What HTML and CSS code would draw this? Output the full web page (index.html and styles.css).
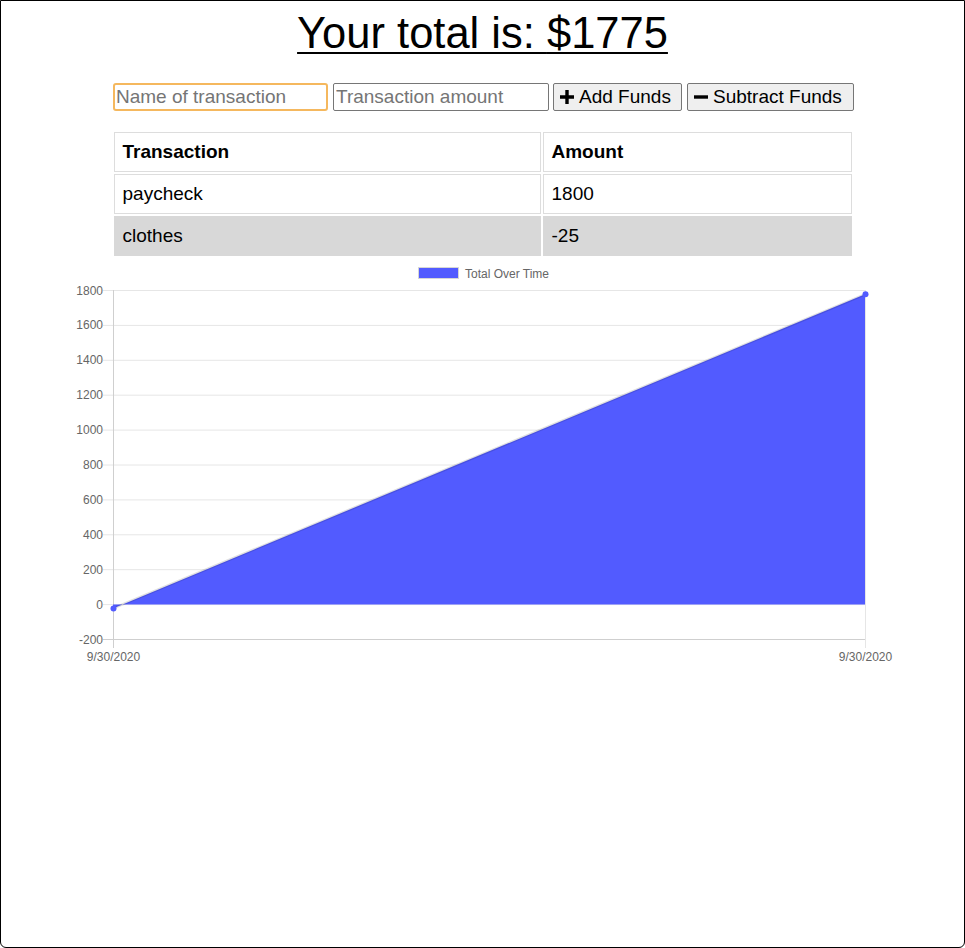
FILE: index.html
```html
<!DOCTYPE html>
<html>
<head>
<meta charset="utf-8">
<title>Budget Tracker</title>
<link rel="stylesheet" href="styles.css">
</head>
<body>
<div class="frame">
  <h1 class="total">Your total is: <span>$1775</span></h1>
  <div class="form">
    <input class="field focused" type="text" placeholder="Name of transaction">
    <input class="field second" type="text" placeholder="Transaction amount">
    <button class="btn add"><svg class="ico" viewBox="0 0 14 14" width="14" height="14"><path d="M5.3 0h3.4v5.3H14v3.4H8.7V14H5.3V8.7H0V5.3h5.3z" fill="#000"/></svg>Add Funds</button>
    <button class="btn sub"><svg class="ico" viewBox="0 0 14 14" width="14" height="14"><rect x="0" y="5.3" width="14" height="3.4" fill="#000"/></svg>Subtract Funds</button>
  </div>
  <table class="tx">
    <thead>
      <tr><th class="c1">Transaction</th><th>Amount</th></tr>
    </thead>
    <tbody>
      <tr><td>paycheck</td><td>1800</td></tr>
      <tr class="alt"><td>clothes</td><td>-25</td></tr>
    </tbody>
  </table>
  <svg class="chart" width="963" height="420" viewBox="1 262 963 420">
    <g class="grid">
      <line x1="103" y1="290.5" x2="865" y2="290.5"/>
      <line x1="103" y1="325.4" x2="865" y2="325.4"/>
      <line x1="103" y1="360.3" x2="865" y2="360.3"/>
      <line x1="103" y1="395.2" x2="865" y2="395.2"/>
      <line x1="103" y1="430.1" x2="865" y2="430.1"/>
      <line x1="103" y1="465" x2="865" y2="465"/>
      <line x1="103" y1="499.9" x2="865" y2="499.9"/>
      <line x1="103" y1="534.8" x2="865" y2="534.8"/>
      <line x1="103" y1="569.7" x2="865" y2="569.7"/>
      <line x1="103" y1="604.6" x2="865" y2="604.6"/>
      <line class="axis" x1="103" y1="639.5" x2="865" y2="639.5"/>
      <line class="axis" x1="113.5" y1="290" x2="113.5" y2="648"/>
      <line x1="865.5" y1="290" x2="865.5" y2="648"/>
    </g>
    <polygon class="area" points="113,608.4 865,294.3 865,604.6 113,604.6"/>
    <line class="stroke" x1="113" y1="608.4" x2="865" y2="294.3"/>
    <circle class="pt" cx="113.5" cy="608.4" r="3"/>
    <circle class="pt" cx="865.5" cy="294.3" r="3"/>
    <g class="ylab">
      <text x="103" y="294.5">1800</text>
      <text x="103" y="329.4">1600</text>
      <text x="103" y="364.3">1400</text>
      <text x="103" y="399.2">1200</text>
      <text x="103" y="434.1">1000</text>
      <text x="103" y="469">800</text>
      <text x="103" y="503.9">600</text>
      <text x="103" y="538.8">400</text>
      <text x="103" y="573.7">200</text>
      <text x="103" y="608.6">0</text>
      <text x="103" y="643.5">-200</text>
    </g>
    <g class="xlab">
      <text x="113.5" y="661">9/30/2020</text>
      <text x="865.5" y="661">9/30/2020</text>
    </g>
    <rect class="legbox" x="418.5" y="267.5" width="40" height="11"/>
    <text class="legtxt" x="465" y="277.5">Total Over Time</text>
  </svg>
</div>
</body>
</html>
```

FILE: styles.css
```css
html, body {
  margin: 0;
  padding: 0;
  background: #fff;
}
.frame {
  box-sizing: border-box;
  width: 965px;
  height: 948px;
  border: 1px solid #000;
  border-radius: 0 0 6px 6px;
  padding-top: 7px;
  font-family: "Liberation Sans", Arial, sans-serif;
  color: #000;
}
.total {
  margin: 0;
  text-align: center;
  font-size: 43.5px;
  font-weight: normal;
  line-height: 50px;
  text-decoration: underline;
  text-decoration-thickness: 2px;
  text-underline-offset: 4px;
}
.form {
  display: flex;
  justify-content: center;
  gap: 5px;
  margin-top: 25px;
  padding-left: 2px;
  height: 28px;
}
.field {
  box-sizing: border-box;
  width: 215px;
  height: 28px;
  margin: 0;
  padding: 0 2px;
  border: 1px solid #767676;
  border-radius: 2px;
  font-family: "Liberation Sans", Arial, sans-serif;
  font-size: 19px;
  color: #000;
  background: #fff;
}
.field::placeholder {
  color: #757575;
}
.focused {
  border: 2px solid #f5b85e;
  border-radius: 3px;
  padding: 0 1px;
  outline: none;
}
.second {
  width: 216px;
  margin-right: -1px;
}
.btn {
  box-sizing: border-box;
  height: 28px;
  margin: 0;
  padding: 0 6px;
  display: flex;
  align-items: center;
  gap: 5px;
  border: 1px solid #767676;
  border-radius: 2px;
  background: #efefef;
  font-family: "Liberation Sans", Arial, sans-serif;
  font-size: 19px;
  color: #000;
}
.add { width: 129px; }
.sub { width: 167px; }
.ico {
  flex: none;
  display: block;
}
.tx {
  width: 742px;
  margin: 19px auto 0;
  border-collapse: separate;
  border-spacing: 2px;
  table-layout: fixed;
  font-size: 19px;
}
.tx th, .tx td {
  box-sizing: border-box;
  text-align: left;
  padding: 8px 8px;
  border: 1px solid #dddddd;
  height: 40px;
  line-height: 22px;
}
.tx th { font-weight: bold; }
.c1 { width: 427px; }
.alt td {
  background: #d8d8d8;
  border-color: #d8d8d8;
}
.chart {
  display: block;
  margin-top: 4px;
}
.grid line {
  stroke: #e6e6e6;
  stroke-width: 1;
}
.grid line.axis {
  stroke: #cfcfcf;
}
.area {
  fill: #525bff;
}
.stroke {
  stroke: rgba(0, 0, 0, 0.12);
  stroke-width: 2.5;
}
.pt {
  fill: #525bff;
}
.ylab text {
  font-family: "Liberation Sans", Arial, sans-serif;
  font-size: 12px;
  fill: #666;
  text-anchor: end;
}
.xlab text {
  font-family: "Liberation Sans", Arial, sans-serif;
  font-size: 12px;
  fill: #666;
  text-anchor: middle;
}
.legbox {
  fill: #525bff;
  stroke: #d6d6d6;
  stroke-width: 1;
}
.legtxt {
  font-family: "Liberation Sans", Arial, sans-serif;
  font-size: 12px;
  fill: #666;
}
```
